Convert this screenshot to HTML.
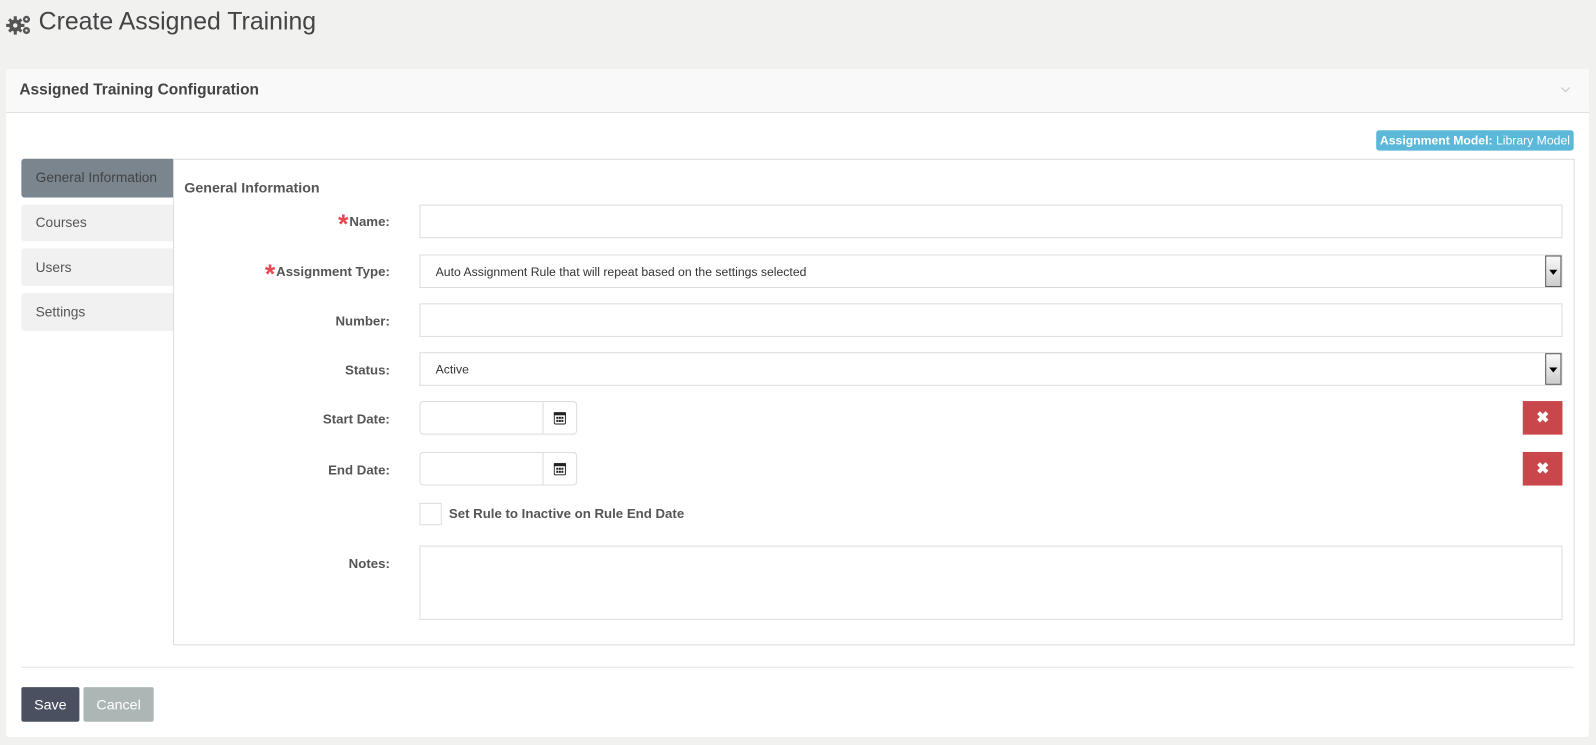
<!DOCTYPE html>
<html><head><meta charset="utf-8"><style>
*{box-sizing:border-box}
html,body{margin:0;width:1596px;height:745px;background:#f1f1f0;overflow:hidden}
#w{position:relative;width:1568px;height:732px;transform:scale(1.0179);transform-origin:0 0;font-family:"Liberation Sans",sans-serif;color:#555}
.a{position:absolute}
.inp{position:absolute;background:#fff;border:1px solid #ddd}
.lbl{position:absolute;right:1185px;font-size:13px;font-weight:bold;color:#555;text-align:right;white-space:nowrap}
.req{color:#e8464f;font-size:26px;vertical-align:-7px;margin-right:1px;line-height:10px}
.tab{position:absolute;left:21px;width:149px;background:#f1f1f1;font-size:13.5px;color:#555;padding-left:14px;border-radius:3px 0 0 3px}
.sel{font-size:12px;color:#333;padding-left:15px;line-height:32px}
.arr{position:absolute;right:0;top:0;width:16px;height:31px;border:1px solid #555;background:linear-gradient(#fafafa,#ccc)}
.arr:after{content:"";position:absolute;left:3px;top:13px;border:4px solid transparent;border-top:5px solid #000}
.del{position:absolute;left:1496px;width:39px;height:33px;background:#c9474a;color:#fff;font-size:15px;font-weight:bold;text-align:center;line-height:33px}
.cal{position:absolute;right:0;top:0;width:33px;height:31px;border-left:1px solid #ddd}
</style></head><body><div id="w">
<svg class="a" style="left:6px;top:12px" width="26" height="24" viewBox="0 0 26 24"><g fill="#555"><circle cx="9" cy="13" r="6"/><g stroke="#555" stroke-width="3"><line x1="9" y1="4" x2="9" y2="22"/><line x1="0" y1="13" x2="18" y2="13"/><line x1="3" y1="7" x2="15" y2="19"/><line x1="15" y1="7" x2="3" y2="19"/></g><circle cx="9" cy="13" r="2.2" fill="#f1f1f0"/><circle cx="20" cy="7" r="3.5"/><circle cx="20" cy="18" r="3.5"/><circle cx="20" cy="7" r="1.2" fill="#f1f1f0"/><circle cx="20" cy="18" r="1.2" fill="#f1f1f0"/></g></svg>
<div class="a" style="left:38px;top:8px;font-size:24.4px;color:#444">Create Assigned Training</div>
<div class="a" style="left:6px;top:68px;width:1555px;height:656px;background:#fff;border-radius:3px"></div>
<div class="a" style="left:6px;top:68px;width:1555px;height:43px;background:#f9f9f9;border-bottom:1px solid #e0e0e0"></div>
<div class="a" style="left:19px;top:80px;font-size:15.2px;font-weight:bold;color:#444">Assigned Training Configuration</div>
<svg class="a" style="left:1533px;top:85px" width="10" height="6" viewBox="0 0 10 6"><path d="M1 1l4 4 4-4" fill="none" stroke="#ccc" stroke-width="1.3"/></svg>
<div class="a" style="left:1352px;top:128px;width:194px;height:20px;background:#5bb8d8;border-radius:3px;color:#fff;font-size:12px;line-height:20px;text-align:center"><b>Assignment Model:</b> Library Model</div>
<div class="a" style="left:170px;top:156px;width:1377px;height:478px;border:1px solid #ddd"></div>
<div class="tab" style="top:156px;height:38px;line-height:38px;background:#7a858d;color:#444">General Information</div>
<div class="tab" style="top:201px;height:36px;line-height:36px">Courses</div>
<div class="tab" style="top:244px;height:37px;line-height:37px">Users</div>
<div class="tab" style="top:288px;height:37px;line-height:37px">Settings</div>
<div class="a" style="left:181px;top:176px;font-size:14px;font-weight:bold;color:#555">General Information</div>
<div class="lbl" style="top:210px"><span class="req">*</span>Name:</div>
<div class="inp" style="left:412px;top:201px;width:1123px;height:33px"></div>
<div class="lbl" style="top:259px"><span class="req">*</span>Assignment Type:</div>
<div class="inp sel" style="left:412px;top:250px;width:1123px;height:33px">Auto Assignment Rule that will repeat based on the settings selected<div class="arr"></div></div>
<div class="lbl" style="top:308px">Number:</div>
<div class="inp" style="left:412px;top:298px;width:1123px;height:33px"></div>
<div class="lbl" style="top:356px">Status:</div>
<div class="inp sel" style="left:412px;top:346px;width:1123px;height:33px">Active<div class="arr"></div></div>
<div class="lbl" style="top:404px">Start Date:</div>
<div class="inp" style="left:412px;top:394px;width:155px;height:33px;border-radius:4px"><div class="cal"><svg style="margin:9px 0 0 10px" width="12" height="13" viewBox="0 0 12 13"><rect x="0.5" y="1.5" width="11" height="11" rx="1" fill="none" stroke="#222"/><rect x="0" y="1" width="12" height="3" fill="#222"/><g fill="#222"><rect x="2.5" y="5.5" width="2" height="2"/><rect x="5" y="5.5" width="2" height="2"/><rect x="7.5" y="5.5" width="2" height="2"/><rect x="2.5" y="8.5" width="2" height="2"/><rect x="5" y="8.5" width="2" height="2"/><rect x="7.5" y="8.5" width="2" height="2"/></g></svg></div></div>
<div class="del" style="top:394px">&#10006;</div>
<div class="lbl" style="top:454px">End Date:</div>
<div class="inp" style="left:412px;top:444px;width:155px;height:33px;border-radius:4px"><div class="cal"><svg style="margin:9px 0 0 10px" width="12" height="13" viewBox="0 0 12 13"><rect x="0.5" y="1.5" width="11" height="11" rx="1" fill="none" stroke="#222"/><rect x="0" y="1" width="12" height="3" fill="#222"/><g fill="#222"><rect x="2.5" y="5.5" width="2" height="2"/><rect x="5" y="5.5" width="2" height="2"/><rect x="7.5" y="5.5" width="2" height="2"/><rect x="2.5" y="8.5" width="2" height="2"/><rect x="5" y="8.5" width="2" height="2"/><rect x="7.5" y="8.5" width="2" height="2"/></g></svg></div></div>
<div class="del" style="top:444px">&#10006;</div>
<div class="inp" style="left:412px;top:494px;width:22px;height:22px"></div>
<div class="a" style="left:441px;top:497px;font-size:13px;font-weight:bold;color:#555">Set Rule to Inactive on Rule End Date</div>
<div class="lbl" style="top:546px">Notes:</div>
<div class="inp" style="left:412px;top:536px;width:1123px;height:73px"></div>
<div class="a" style="left:21px;top:655px;width:1525px;height:1px;background:#e5e5e5"></div>
<div class="a" style="left:21px;top:675px;width:57px;height:34px;background:#4a5060;border-radius:2px;color:#fff;font-size:14px;text-align:center;line-height:34px">Save</div>
<div class="a" style="left:82px;top:675px;width:69px;height:34px;background:#abb6b5;border-radius:2px;color:#fff;font-size:14px;text-align:center;line-height:34px">Cancel</div>
</div></body></html>
